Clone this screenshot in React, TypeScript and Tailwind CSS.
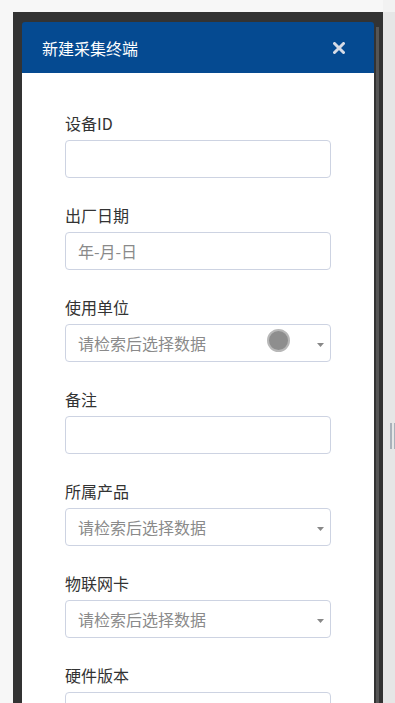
import React from "react";

const fields = [
    { id: "deviceId", label: "设备ID", type: "text" },
    { id: "date", label: "出厂日期", type: "date" },
    { id: "unit", label: "使用单位", type: "select", loading: true },
    { id: "remark", label: "备注", type: "text" },
    { id: "product", label: "所属产品", type: "select" },
    { id: "card", label: "物联网卡", type: "select" },
    { id: "hw", label: "硬件版本", type: "text" },
];

const font = { fontFamily: "'Noto Sans CJK SC', 'Liberation Sans', sans-serif" };

function Field({ label, type, loading }: { label: string; type: string; loading?: boolean }) {
    return (
        <div className="flex flex-col gap-[7px] mb-[27px]">
            <div className="h-5 leading-5 text-[16px] text-[#333]">{label}</div>
            <div className="relative h-[38px] rounded-[4px] border border-[#cdd3e2] bg-white flex items-center pl-3 pr-[6px] text-[16px] text-[#8a8a8a]">
                {type === "date" && <span>年-月-日</span>}
                {type === "select" && (
                    <>
                        <span className="flex-1">请检索后选择数据</span>
                        {loading && (
                            <div className="absolute left-[201px] top-[4px] w-[23px] h-[23px] rounded-full bg-[#8e8e8e] border-2 border-[#b8b8b8]" />
                        )}
                        <svg width="7" height="4" viewBox="0 0 7 4" className="mt-[4px]">
                            <path d="M0 0h7L3.5 4z" fill="#888" />
                        </svg>
                    </>
                )}
            </div>
        </div>
    );
}

export default function App() {
    return (
        <div className="w-[395px] h-[703px] overflow-hidden flex bg-[#f7f7f7]" style={font}>
            {/* left strip */}
            <div className="w-[13px] shrink-0" />

            {/* dark frame */}
            <div className="w-[370px] shrink-0 flex flex-col">
                <div className="h-[12px] shrink-0" />
                <div className="flex-1 bg-[#333333] flex pt-[10px] pl-[9px]">
                    <div className="w-[352px] shrink-0 flex flex-col">
                        {/* header */}
                        <div className="h-[51px] shrink-0 bg-[#054a91] rounded-t-[3px] flex items-center justify-between pl-5 pr-[29px]">
                            <span className="text-[16px] text-white">新建采集终端</span>
                            <svg width="12" height="12" viewBox="0 0 12 12">
                                <path d="M1.5 1.5l9 9M10.5 1.5l-9 9" stroke="#d6dbe6" strokeWidth="3" strokeLinecap="round" />
                            </svg>
                        </div>
                        {/* body */}
                        <div className="flex-1 bg-white pt-10 px-[43px]">
                            {fields.map((f) => (
                                <Field key={f.id} label={f.label} type={f.type} loading={f.loading} />
                            ))}
                        </div>
                    </div>
                    <div className="w-[2px] shrink-0" />
                    <div className="w-[3px] shrink-0 flex flex-col">
                        <div className="h-[5px] shrink-0" />
                        <div className="flex-1 bg-[#555555]" />
                    </div>
                </div>
            </div>

            {/* right strip */}
            <div className="w-[12px] shrink-0 flex flex-col">
                <div className="h-[12px] shrink-0 bg-[#f2f2f2]" />
                <div className="flex-1 bg-[#e6e6e6] pt-[411px] pl-[7px] flex gap-[2px]">
                    <div className="w-[2px] h-[26px] bg-[#a9b1ba]" />
                    <div className="w-[2px] h-[26px] bg-[#a9b1ba]" />
                </div>
            </div>
        </div>
    );
}
